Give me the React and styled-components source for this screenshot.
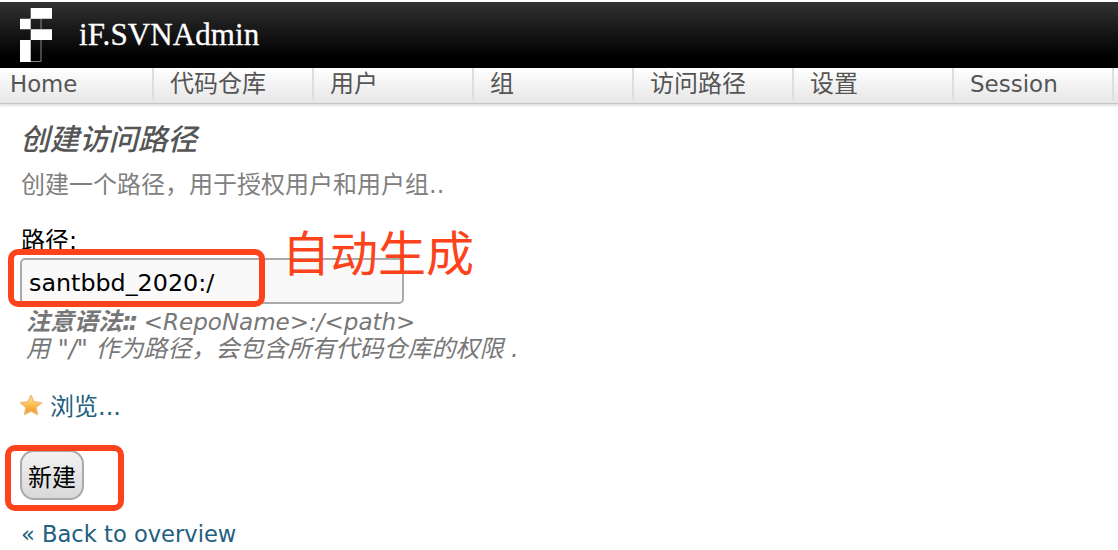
import styled, { createGlobalStyle } from "styled-components";

const GlobalStyle = createGlobalStyle`
  html, body {
    margin: 0;
    padding: 0;
    background: #fff;
    font-family: "DejaVu Sans", "Noto Sans CJK SC", sans-serif;
    overflow: hidden;
  }
`;

const Page = styled.div`
  position: relative;
  width: 1118px;
  height: 550px;
  overflow: hidden;
`;

const Header = styled.header`
  display: flex;
  align-items: center;
  gap: 27px;
  height: 66px;
  margin-top: 2px;
  padding-left: 20px;
  background: linear-gradient(#333 0%, #1c1c1c 35%, #000 85%, #000 100%);
`;

const Brand = styled.span`
  color: #fff;
  font-family: "Liberation Serif", serif;
  font-size: 31px;
  letter-spacing: 0.1px;
  -webkit-text-stroke: 0.3px #fff;
`;

const Nav = styled.nav`
  display: flex;
  height: 35px;
  background: linear-gradient(#fff, #e6e6e6);
  border-bottom: 1px solid #c4c4c4;
  box-shadow: 0 2px 2px #e2e2e2;
`;

const NavItem = styled.a`
  box-sizing: border-box;
  flex: none;
  width: ${(p) => p.$width}px;
  height: 32px;
  padding-left: ${(p) => p.$pad}px;
  border-right: 2px solid #dedede;
  color: #555;
  font-size: ${(p) => p.$size}px;
  line-height: 32px;
`;

const Content = styled.main`
  padding: 14px 0 0 20px;
`;

const Title = styled.h1`
  margin: 0;
  color: #555;
  font-family: "Noto Sans CJK SC", sans-serif;
  font-size: 29.5px;
  font-style: italic;
  font-weight: 500;
  line-height: 38px;
`;

const Intro = styled.p`
  margin: 12px 0 0 1px;
  color: #808080;
  font-size: 24px;
  line-height: 34px;
`;

const Label = styled.label`
  display: block;
  margin: 25px 0 0 1px;
  color: #000;
  font-size: 24px;
  line-height: 28px;
`;

const PathInput = styled.div`
  box-sizing: border-box;
  width: 384px;
  height: 46px;
  margin-top: 3px;
  padding-left: 7px;
  border: 2px solid #aaa;
  border-radius: 5px;
  background: #f9f9f9;
  color: #000;
  font-size: 23.8px;
  line-height: 46px;
`;

const Hint = styled.div`
  margin: 5px 0 0 6px;
  color: #777;
  font-size: 24px;
  font-style: italic;
  line-height: 27px;
`;

const Syntax = styled.span`
  font-size: 23px;
`;

const Colons = styled.span`
  letter-spacing: -3px;
  margin-right: 1px;
`;

const BrowseRow = styled.div`
  display: flex;
  align-items: center;
  gap: 7px;
  margin: 27px 0 0 -1px;
`;

const StarIcon = styled.svg`
  margin-top: -4px;
`;

const LinkText = styled.a`
  color: #22607f;
  font-size: ${(p) => p.$size}px;
  line-height: 34px;
`;

const SubmitButton = styled.button`
  display: block;
  box-sizing: border-box;
  width: 64px;
  height: 50px;
  margin-top: 26px;
  padding: 0;
  border: 2px solid #aaa;
  border-radius: 14px;
  background: linear-gradient(#f2f2f2, #d9d9d9);
  color: #000;
  font-family: inherit;
  font-size: 24px;
`;

const BackRow = styled.div`
  margin: 17px 0 0 1px;
`;

const Callout = styled.div`
  position: absolute;
  box-sizing: border-box;
  left: ${(p) => p.$left}px;
  top: ${(p) => p.$top}px;
  width: ${(p) => p.$width}px;
  height: ${(p) => p.$height}px;
  border: 6px solid #fc431c;
  border-radius: 10px;
`;

const CalloutText = styled.div`
  position: absolute;
  left: 282px;
  top: 220px;
  color: #fc431c;
  font-family: "Noto Sans CJK SC", sans-serif;
  font-size: 48px;
  line-height: 60px;
`;

function Logo() {
  return (
    <svg width="32" height="54" viewBox="0 0 32 54" aria-hidden="true">
      <path fill="none" stroke="#888" d="M21 11V21M21 32V53.500H10" />
      <path fill="none" stroke="#666" d="M10 10.500H21" />
      <path fill="#fff" d="M10.700 0H32V10.700H10.700ZM0 10.700H10.700V21.300H0ZM10.700 21.300H32V32H10.700ZM0 32H10.700V54H0Z" />
    </svg>
  );
}

function Star() {
  return (
    <StarIcon width="24" height="22" viewBox="0 0 24 22" aria-hidden="true">
      <defs>
        <linearGradient id="star" x1="0" y1="0" x2="0" y2="1">
          <stop offset="0" stopColor="#fde8a6" />
          <stop offset="0.55" stopColor="#f9bb45" />
          <stop offset="1" stopColor="#ee8a1e" />
        </linearGradient>
      </defs>
      <path
        fill="url(#star)"
        stroke="#f1bd7a"
        strokeWidth="1.500"
        strokeLinejoin="round"
        d="M12 1.500L15 7.800L22.500 8.700L17 13.500L18.500 20.500L12 17L5.500 20.500L7 13.500L1.500 8.700L9 7.800Z"
      />
    </StarIcon>
  );
}

const navItems = [
  ["Home", 154, 10, 22.8],
  ["代码仓库", 160, 16, 24],
  ["用户", 160, 16, 24],
  ["组", 160, 16, 24],
  ["访问路径", 160, 16, 24],
  ["设置", 160, 16, 24],
  ["Session", 160, 16, 23],
];

export default function App() {
  return (
    <Page>
      <GlobalStyle />
      <Header>
        <Logo />
        <Brand>iF.SVNAdmin</Brand>
      </Header>
      <Nav>
        {navItems.map(([label, width, pad, size]) => (
          <NavItem key={label} $width={width} $pad={pad} $size={size}>
            {label}
          </NavItem>
        ))}
      </Nav>
      <Content>
        <Title>创建访问路径</Title>
        <Intro>创建一个路径，用于授权用户和用户组..</Intro>
        <Label>路径:</Label>
        <PathInput>santbbd_2020:/</PathInput>
        <Hint>
          <b>
            注意语法<Colons>::</Colons>
          </b>{" "}
          <Syntax>&lt;RepoName&gt;:/&lt;path&gt;</Syntax>
          <br />
          用 "/" 作为路径，会包含所有代码仓库的权限 .
        </Hint>
        <BrowseRow>
          <Star />
          <LinkText $size={24}>浏览...</LinkText>
        </BrowseRow>
        <SubmitButton>新建</SubmitButton>
        <BackRow>
          <LinkText $size={22.6}>« Back to overview</LinkText>
        </BackRow>
      </Content>
      <Callout $left={8} $top={249} $width={257} $height={58} />
      <Callout $left={5} $top={445} $width={119} $height={66} />
      <CalloutText>自动生成</CalloutText>
    </Page>
  );
}
